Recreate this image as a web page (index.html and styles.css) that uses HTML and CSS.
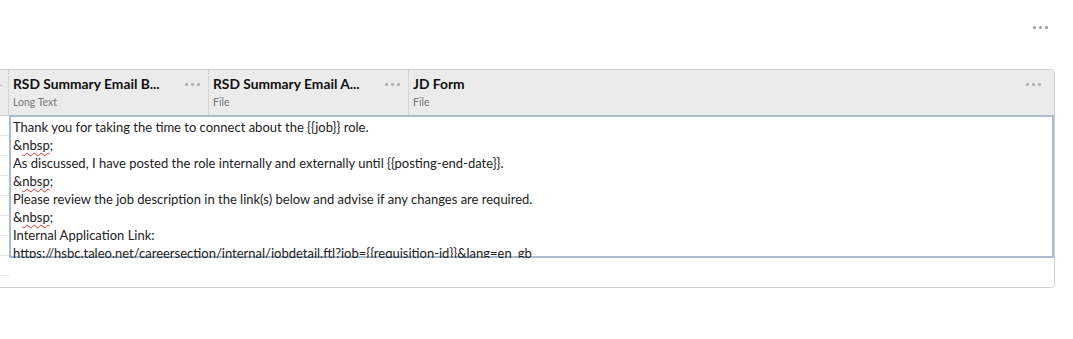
FILE: index.html
```html
<!DOCTYPE html>
<html lang="en">
<head>
  <meta charset="UTF-8">
  <meta name="viewport" content="width=device-width, initial-scale=1.0">
  <title>Grid</title>
  <link rel="stylesheet" href="styles.css">
</head>
<body>
  <div class="topbar">
    <span class="dots"><i></i><i></i><i></i></span>
  </div>

  <div class="grid">
    <div class="grid-header">
      <div class="gutter-head"><span class="dash"></span></div>
      <div class="col col-fixed">
        <div class="col-text">
          <div class="col-title">RSD Summary Email B...</div>
          <div class="col-type">Long Text</div>
        </div>
        <span class="dots"><i></i><i></i><i></i></span>
      </div>
      <div class="col col-fixed">
        <div class="col-text">
          <div class="col-title">RSD Summary Email A...</div>
          <div class="col-type">File</div>
        </div>
        <span class="dots"><i></i><i></i><i></i></span>
      </div>
      <div class="col col-fill">
        <div class="col-text">
          <div class="col-title">JD Form</div>
          <div class="col-type">File</div>
        </div>
        <span class="dots"><i></i><i></i><i></i></span>
      </div>
    </div>

    <div class="grid-body">
      <div class="gutter">
        <div class="row"></div>
        <div class="row"></div>
        <div class="row"></div>
        <div class="row"></div>
        <div class="row"></div>
        <div class="row"></div>
        <div class="row"></div>
        <div class="row"></div>
      </div>
      <div class="cells">
        <div class="editor">
          <p>Thank you for taking the time to connect about the {{job}} role.</p>
          <p>&amp;<span class="typo">nbsp</span>;</p>
          <p>As discussed, I have posted the role internally and externally until {{posting-end-date}}.</p>
          <p>&amp;<span class="typo">nbsp</span>;</p>
          <p>Please review the job description in the link(s) below and advise if any changes are required.</p>
          <p>&amp;<span class="typo">nbsp</span>;</p>
          <p>Internal Application Link:</p>
          <p>https://hsbc.taleo.net/careersection/internal/jobdetail.ftl?job={{requisition-id}}&amp;lang=en_gb</p>
        </div>
      </div>
    </div>
  </div>
</body>
</html>
```

FILE: styles.css
```css
body {
  margin: 0;
  padding: 0;
  background: #fff;
  font-family: "Lato", "Open Sans", sans-serif;
  color: #222;
}
.topbar {
  height: 69px;
  display: flex;
  justify-content: flex-end;
  padding-right: 25px;
  box-sizing: border-box;
}
.topbar .dots {
  margin-top: 26px;
}
.dots {
  display: flex;
  gap: 3px;
  height: 3px;
}
.dots i {
  display: block;
  width: 3px;
  height: 3px;
  border-radius: 50%;
  background: #999;
}
.grid {
  margin-left: -40px;
  margin-right: 18px;
  border: 1px solid #d0d0d0;
  border-radius: 4px;
  overflow: hidden;
}
.grid-header {
  display: flex;
  height: 45px;
  background: #ebebeb;
  border-bottom: 1px solid #d0d0d0;
}
.gutter-head {
  width: 47px;
  border-right: 1px solid #d5d5d5;
  position: relative;
}
.dash {
  position: absolute;
  right: 6px;
  top: 15px;
  width: 3px;
  height: 1px;
  background: #bbb;
}
.col {
  display: flex;
  justify-content: space-between;
  box-sizing: border-box;
  padding: 5px 8px 0 4px;
  border-right: 1px solid #d5d5d5;
}
.col-fixed {
  width: 200px;
}
.col-fill {
  flex: 1;
  border-right: none;
  padding-right: 13px;
}
.col .dots {
  margin-top: 8px;
}
.col .dots i {
  background: #aaa;
}
.col-title {
  font-weight: bold;
  font-size: 13.8px;
  line-height: 18px;
  color: #111;
}
.col-type {
  font-size: 10.5px;
  line-height: 14px;
  margin-top: 2px;
  color: #777;
}
.grid-body {
  display: flex;
  height: 171px;
}
.gutter {
  width: 48px;
}
.gutter .row {
  height: 19px;
  border-bottom: 1px solid #e6e6e6;
}
.cells {
  flex: 1;
  margin-top: -1px;
}
.editor {
  height: 143px;
  box-shadow: inset 0 0 0 2px #a9bcd6;
  box-sizing: border-box;
  padding: 3px 5px 0 4px;
  overflow: hidden;
  font-size: 13px;
  line-height: 18px;
  color: #222;
}
.editor p {
  margin: 0;
  white-space: nowrap;
}
.typo {
  text-decoration: underline wavy #e0302a;
  text-decoration-thickness: 1px;
  text-underline-offset: 2px;
}
```
